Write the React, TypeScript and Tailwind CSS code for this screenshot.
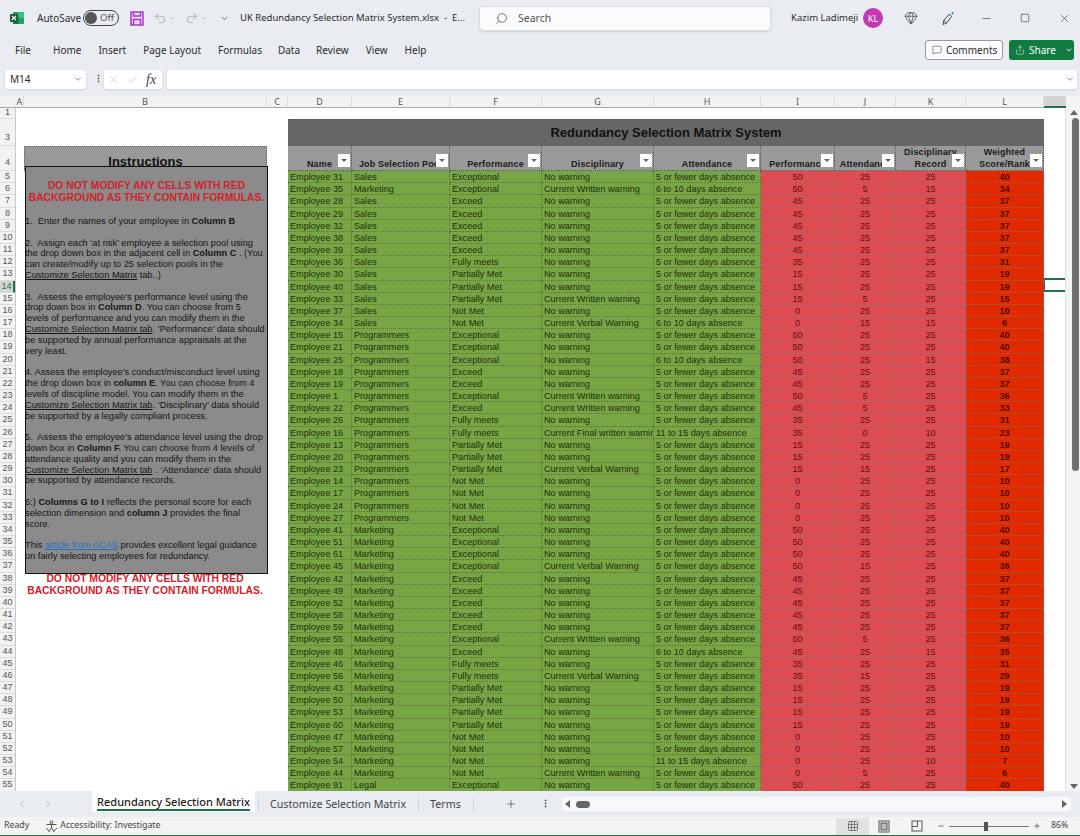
import { ChevronDown, ChevronLeft, ChevronRight, Check, Gem, Grid3x3, Minus, MessageSquare, Plus, Search, Share, Square, Undo2, Redo2, X } from "lucide-react";

type Row = [string, string, string, string, string, number, number, number, number];

const NW = "No warning";
const CW = "Current Written warning";
const CV = "Current Verbal Warning";
const FEW = "5 or fewer days absence";
const SIX = "6 to 10 days absence";
const ELEVEN = "11 to 15 days absence";

const rows: Row[] = [
  ["Employee 31", "Sales", "Exceptional", NW, FEW, 50, 25, 25, 40],
  ["Employee 35", "Marketing", "Exceptional", CW, SIX, 50, 5, 15, 34],
  ["Employee 28", "Sales", "Exceed", NW, FEW, 45, 25, 25, 37],
  ["Employee 29", "Sales", "Exceed", NW, FEW, 45, 25, 25, 37],
  ["Employee 32", "Sales", "Exceed", NW, FEW, 45, 25, 25, 37],
  ["Employee 38", "Sales", "Exceed", NW, FEW, 45, 25, 25, 37],
  ["Employee 39", "Sales", "Exceed", NW, FEW, 45, 25, 25, 37],
  ["Employee 36", "Sales", "Fully meets", NW, FEW, 35, 25, 25, 31],
  ["Employee 30", "Sales", "Partially Met", NW, FEW, 15, 25, 25, 19],
  ["Employee 40", "Sales", "Partially Met", NW, FEW, 15, 25, 25, 19],
  ["Employee 33", "Sales", "Partially Met", CW, FEW, 15, 5, 25, 15],
  ["Employee 37", "Sales", "Not Met", NW, FEW, 0, 25, 25, 10],
  ["Employee 34", "Sales", "Not Met", CV, SIX, 0, 15, 15, 6],
  ["Employee 15", "Programmers", "Exceptional", NW, FEW, 50, 25, 25, 40],
  ["Employee 21", "Programmers", "Exceptional", NW, FEW, 50, 25, 25, 40],
  ["Employee 25", "Programmers", "Exceptional", NW, SIX, 50, 25, 15, 38],
  ["Employee 18", "Programmers", "Exceed", NW, FEW, 45, 25, 25, 37],
  ["Employee 19", "Programmers", "Exceed", NW, FEW, 45, 25, 25, 37],
  ["Employee 1", "Programmers", "Exceptional", CW, FEW, 50, 5, 25, 36],
  ["Employee 22", "Programmers", "Exceed", CW, FEW, 45, 5, 25, 33],
  ["Employee 26", "Programmers", "Fully meets", NW, FEW, 35, 25, 25, 31],
  ["Employee 16", "Programmers", "Fully meets", "Current Final written warning", ELEVEN, 35, 0, 10, 23],
  ["Employee 13", "Programmers", "Partially Met", NW, FEW, 15, 25, 25, 19],
  ["Employee 20", "Programmers", "Partially Met", NW, FEW, 15, 25, 25, 19],
  ["Employee 23", "Programmers", "Partially Met", CV, FEW, 15, 15, 25, 17],
  ["Employee 14", "Programmers", "Not Met", NW, FEW, 0, 25, 25, 10],
  ["Employee 17", "Programmers", "Not Met", NW, FEW, 0, 25, 25, 10],
  ["Employee 24", "Programmers", "Not Met", NW, FEW, 0, 25, 25, 10],
  ["Employee 27", "Programmers", "Not Met", NW, FEW, 0, 25, 25, 10],
  ["Employee 41", "Marketing", "Exceptional", NW, FEW, 50, 25, 25, 40],
  ["Employee 51", "Marketing", "Exceptional", NW, FEW, 50, 25, 25, 40],
  ["Employee 61", "Marketing", "Exceptional", NW, FEW, 50, 25, 25, 40],
  ["Employee 45", "Marketing", "Exceptional", CV, FEW, 50, 15, 25, 38],
  ["Employee 42", "Marketing", "Exceed", NW, FEW, 45, 25, 25, 37],
  ["Employee 49", "Marketing", "Exceed", NW, FEW, 45, 25, 25, 37],
  ["Employee 52", "Marketing", "Exceed", NW, FEW, 45, 25, 25, 37],
  ["Employee 58", "Marketing", "Exceed", NW, FEW, 45, 25, 25, 37],
  ["Employee 59", "Marketing", "Exceed", NW, FEW, 45, 25, 25, 37],
  ["Employee 55", "Marketing", "Exceptional", CW, FEW, 50, 5, 25, 36],
  ["Employee 48", "Marketing", "Exceed", NW, SIX, 45, 25, 15, 35],
  ["Employee 46", "Marketing", "Fully meets", NW, FEW, 35, 25, 25, 31],
  ["Employee 56", "Marketing", "Fully meets", CV, FEW, 35, 15, 25, 29],
  ["Employee 43", "Marketing", "Partially Met", NW, FEW, 15, 25, 25, 19],
  ["Employee 50", "Marketing", "Partially Met", NW, FEW, 15, 25, 25, 19],
  ["Employee 53", "Marketing", "Partially Met", NW, FEW, 15, 25, 25, 19],
  ["Employee 60", "Marketing", "Partially Met", NW, FEW, 15, 25, 25, 19],
  ["Employee 47", "Marketing", "Not Met", NW, FEW, 0, 25, 25, 10],
  ["Employee 57", "Marketing", "Not Met", NW, FEW, 0, 25, 25, 10],
  ["Employee 54", "Marketing", "Not Met", NW, ELEVEN, 0, 25, 10, 7],
  ["Employee 44", "Marketing", "Not Met", CW, FEW, 0, 5, 25, 6],
  ["Employee 91", "Legal", "Exceptional", NW, FEW, 50, 25, 25, 40],
];

const tableCols = "grid grid-cols-[64px_98px_92px_112px_107px_74px_61px_70px_78px]";
const dotted = "border-r border-b border-dotted";

// rows in the sheet are 12.18px apart, kept on whole pixels so the dotted lines stay even
const rowHeight = (i: number) => (i % 6 === 2 ? "h-[13px] grid-rows-[13px]" : "h-[12px] grid-rows-[12px]");

function FilterButton() {
  return (
    <span className="absolute right-[1px] bottom-[3px] flex h-[13px] w-[12px] items-center justify-center bg-white">
      <span className="h-0 w-0 border-x-[3px] border-t-[3px] border-x-transparent border-t-[#666]" />
    </span>
  );
}

function HeaderCell({ lines }: { lines: string[] }) {
  return (
    <div className={`relative flex flex-col items-center justify-end overflow-hidden whitespace-nowrap text-[9px] leading-[12px] font-bold tracking-[0.15px] text-[#1b1b1b] ${dotted} border-[#555]`}>
      {lines.map((l) => (
        <div key={l}>{l}</div>
      ))}
      <FilterButton />
    </div>
  );
}

function TextCell({ children }: { children: string }) {
  return (
    <div className={`overflow-hidden whitespace-nowrap pl-[2px] ${dotted} border-[#5f7040] bg-[#78a645] text-[#18300c]`}>
      {children}
    </div>
  );
}

function NumCell({ value, strong }: { value: number; strong?: boolean }) {
  return strong ? (
    <div className={`overflow-hidden text-center font-bold ${dotted} border-[#8a6a60] bg-[#e12a00] text-[#4f0c00]`}>{value}</div>
  ) : (
    <div className={`overflow-hidden text-center ${dotted} border-[#8f6f70] bg-[#dc4c50] text-[#5f1014]`}>{value}</div>
  );
}

function Line({ children }: { children?: React.ReactNode }) {
  return <div className="h-[10.82px] whitespace-pre">{children}</div>;
}

function SheetLink({ children }: { children: string }) {
  return <span className="underline">{children}</span>;
}

function RedWarning() {
  return (
    <div className="text-center text-[10.3px] leading-[12px] font-bold whitespace-nowrap text-[#d4202a]">
      <div>DO NOT MODIFY ANY CELLS WITH RED</div>
      <div>BACKGROUND AS THEY CONTAIN FORMULAS.</div>
    </div>
  );
}

function Instructions() {
  return (
    <div className="absolute left-[9px] top-[58px] h-[408px] w-[243px] overflow-hidden border border-[#111] bg-[#8b8b8b]">
      <div className="pt-[13px]">
        <RedWarning />
      </div>
      <div className="-ml-[1px] pt-[12px] text-[9.25px] leading-[10.82px] text-[#151515]">
        <Line>1.  Enter the names of your employee in <b>Column B</b></Line>
        <Line />
        <Line>2.  Assign each ‘at risk’ employee a selection pool using</Line>
        <Line>the drop down box in the adjacent cell in <b>Column C</b> . (You</Line>
        <Line>can create/modify up to 25 selection pools in the</Line>
        <Line><SheetLink>Customize Selection Matrix</SheetLink> tab..)</Line>
        <Line />
        <Line>3.  Assess the employee's performance level using the</Line>
        <Line>drop down box in <b>Column D</b>. You can choose from 5</Line>
        <Line>levels of performance and you can modify them in the</Line>
        <Line><SheetLink>Customize Selection Matrix tab</SheetLink>. ‘Performance’ data should</Line>
        <Line>be supported by annual performance appraisals at the</Line>
        <Line>very least.</Line>
        <Line />
        <Line>4. Assess the employee's conduct/misconduct level using</Line>
        <Line>the drop down box in <b>column E</b>. You can choose from 4</Line>
        <Line>levels of discipline model. You can modify them in the</Line>
        <Line><SheetLink>Customize Selection Matrix tab</SheetLink>. ‘Disciplinary’ data should</Line>
        <Line>be supported by a legally compliant process.</Line>
        <Line />
        <Line>5.  Assess the employee's attendance level using the drop</Line>
        <Line>down box in <b>Column F.</b> You can choose from 4 levels of</Line>
        <Line>attendance quality and you can modify them in the</Line>
        <Line><SheetLink>Customize Selection Matrix tab</SheetLink> . ‘Attendance’ data should</Line>
        <Line>be supported by attendance records.</Line>
        <Line />
        <Line>6:) <b>Columns G to I</b> reflects the personal score for each</Line>
        <Line>selection dimension and <b>column J</b> provides the final</Line>
        <Line>score.</Line>
        <Line />
        <Line>This <span className="text-[#1f6fc4] underline">article from ACAS</span> provides excellent legal guidance</Line>
        <Line>on fairly selecting employees for redundancy.</Line>
      </div>
    </div>
  );
}

function RowHeaders() {
  return (
    <div className="w-[16px] shrink-0 border-r border-[#c8c8c8] bg-[#f2f2f2] text-center text-[9px] text-[#555]">
      <div className="flex h-[11px] items-center justify-center border-b border-[#dcdcdc]">1</div>
      <div className="flex h-[27px] items-end justify-center border-b border-[#dcdcdc]">3</div>
      <div className="flex h-[25px] items-end justify-center border-b border-[#dcdcdc]">4</div>
      {rows.map((_, i) => (
        <div
          key={i}
          className={`${rowHeight(i)} ${
            i + 5 === 14
              ? "border-b border-r-2 border-[#dcdcdc] border-r-[#1f7246] bg-[#d4d4d4] leading-[11px] text-[#1f7246]"
              : "border-b border-[#dcdcdc] leading-[11px]"
          }`}
        >
          {i + 5}
        </div>
      ))}
    </div>
  );
}

function ColumnHeaders() {
  const cols: [string, string][] = [
    ["A", "w-[8px]"],
    ["B", "w-[243px]"],
    ["C", "w-[21px]"],
    ["D", "w-[64px]"],
    ["E", "w-[98px]"],
    ["F", "w-[92px]"],
    ["G", "w-[112px]"],
    ["H", "w-[107px]"],
    ["I", "w-[74px]"],
    ["J", "w-[61px]"],
    ["K", "w-[70px]"],
    ["L", "w-[78px]"],
  ];
  return (
    <div className="flex h-[12px] bg-[#f2f2f2] text-[9px] leading-[11px] text-[#555]">
      <div className="w-[16px] shrink-0 border-b border-[#a8a8a8]" />
      {cols.map(([c, w]) => (
        <div key={c} className={`${w} shrink-0 border-r border-b border-r-[#dcdcdc] border-b-[#a8a8a8] text-center`}>
          {c}
        </div>
      ))}
      <div className="w-[22px] shrink-0 border-b-2 border-[#1f7246] bg-[#d4d4d4]" />
      <div className="flex-1 bg-[#f3f4f5]" />
    </div>
  );
}

function ExcelLogo() {
  return (
    <svg width="14" height="14" viewBox="0 0 14 14">
      <rect x="3" y="1" width="11" height="12" rx="1" fill="#21a366" />
      <rect x="8.5" y="1" width="5.5" height="6" fill="#33c481" />
      <rect x="3" y="7" width="5.5" height="6" fill="#107c41" />
      <rect x="0" y="3" width="8" height="8" rx="1" fill="#185c37" />
      <path d="M2 5l4 4M6 5l-4 4" stroke="#fff" strokeWidth="1.1" />
    </svg>
  );
}

function SaveIcon() {
  return (
    <svg width="14" height="15" viewBox="0 0 14 15" fill="none" stroke="#a43bc4" strokeWidth="1.5">
      <rect x="1" y="1" width="12" height="13" fill="#f0d8f6" />
      <path d="M3.5 1v4h7V1M3.5 14V8.5h7V14" />
    </svg>
  );
}

function CoauthorPen() {
  return (
    <svg width="14" height="15" viewBox="0 0 14 15" fill="none" stroke="#333" strokeWidth="0.9">
      <path d="M2 13.5l.8-4L8 3.2l2.6 2.2L5.5 12z" />
      <path d="M2.8 9.5L5.5 12" />
      <path d="M11.5 1v2.4M10.3 2.2h2.4" stroke="#2b88c8" />
    </svg>
  );
}

function AccessibilityIcon() {
  return (
    <svg width="13" height="13" viewBox="0 0 13 13" fill="none" stroke="#444" strokeWidth="0.9">
      <circle cx="6.5" cy="2.2" r="1.4" />
      <path d="M1.5 4.5h10M6.5 4.5v3M4 12l2.5-4.5L9 12M1 8l3 3M12 8l-3 3" />
    </svg>
  );
}

function PageLayoutIcon() {
  return (
    <svg width="12" height="13" viewBox="0 0 12 13" fill="none" stroke="#444" strokeWidth="0.9">
      <rect x="1" y="1" width="10" height="11" />
      <rect x="3" y="3" width="6" height="7" fill="#bbb" />
    </svg>
  );
}

function PageBreakIcon() {
  return (
    <svg width="12" height="12" viewBox="0 0 12 12" fill="none" stroke="#444" strokeWidth="0.9">
      <rect x="1" y="1" width="10" height="10" />
      <path d="M6.5 1v5.5H1" />
    </svg>
  );
}

export default function App() {
  return (
    <div className="flex h-[836px] w-[1080px] flex-col overflow-hidden bg-[#e9edf1] font-['Noto_Sans',sans-serif] text-[#2b2b2b]">
      {/* title bar */}
      <div className="flex h-[37px] items-center text-[10px] whitespace-nowrap">
        <div className="ml-[10px] w-[27px]"><ExcelLogo /></div>
        <span className="w-[46px]">AutoSave</span>
        <div className="flex h-[16px] w-[36px] items-center justify-between rounded-full border border-[#444] pl-[1px] pr-[4px] text-[9.5px] text-[#555]">
          <span className="h-[12px] w-[12px] rounded-full bg-[#555]" />
          Off
        </div>
        <div className="ml-[11px] w-[23px]"><SaveIcon /></div>
        <Undo2 className="h-[14px] w-[14px] text-[#9a9a9a]" strokeWidth={1.3} />
        <ChevronDown className="ml-[1px] h-[7px] w-[7px] text-[#9a9a9a]" />
        <Redo2 className="ml-[10px] h-[14px] w-[14px] text-[#9a9a9a]" strokeWidth={1.3} />
        <ChevronDown className="ml-[1px] h-[7px] w-[7px] text-[#9a9a9a]" />
        <ChevronDown className="ml-[13px] h-[9px] w-[9px] text-[#444]" />
        <span className="ml-[11px] w-[239px] whitespace-pre text-[9.5px]">UK Redundancy Selection Matrix System.xlsx  -  E...</span>
        <div className="flex h-[25px] w-[292px] items-center rounded-[4px] border border-[#dde0e3] bg-[#fafbfc] pl-[15px] text-[10.5px] text-[#555] shadow-sm">
          <Search className="h-[13px] w-[13px] -scale-x-100 text-[#444]" strokeWidth={1.3} />
          <span className="ml-[10px]">Search</span>
        </div>
        <span className="ml-[20px] w-[72px] text-[9.5px]">Kazim Ladimeji</span>
        <span className="flex h-[20px] w-[20px] items-center justify-center rounded-full bg-[#c239b3] text-[9px] text-white">KL</span>
        <Gem className="ml-[21px] h-[14px] w-[14px] text-[#333]" strokeWidth={1.2} />
        <span className="ml-[23px]"><CoauthorPen /></span>
        <Minus className="ml-[25px] h-[13px] w-[13px] text-[#333]" strokeWidth={1.1} />
        <Square className="ml-[27px] h-[10px] w-[10px] text-[#333]" strokeWidth={1.4} />
        <X className="ml-[28px] h-[13px] w-[13px] text-[#333]" strokeWidth={1.1} />
      </div>

      {/* ribbon tabs */}
      <div className="flex h-[33px] items-center pb-[6px] text-[10px]">
        <span className="ml-[15px]">File</span>
        <span className="ml-[22px]">Home</span>
        <span className="ml-[17px]">Insert</span>
        <span className="ml-[17px]">Page Layout</span>
        <span className="ml-[17px]">Formulas</span>
        <span className="ml-[16px]">Data</span>
        <span className="ml-[16px]">Review</span>
        <span className="ml-[17px]">View</span>
        <span className="ml-[17px]">Help</span>
        <div className="ml-auto flex h-[20px] w-[78px] items-center gap-[4px] rounded-[3px] border border-[#9a9a9a] bg-[#fafbfc] pl-[6px]">
          <MessageSquare className="h-[10px] w-[10px]" strokeWidth={1.2} />
          Comments
        </div>
        <div className="mr-[6px] ml-[6px] flex h-[20px] w-[65px] items-center gap-[4px] rounded-[3px] bg-[#107c41] pl-[6px] text-white">
          <Share className="h-[10px] w-[10px]" strokeWidth={1.3} />
          Share
          <ChevronDown className="ml-[5px] h-[8px] w-[8px]" strokeWidth={2.5} />
        </div>
      </div>

      {/* formula bar */}
      <div className="flex h-[26px] items-start text-[10px]">
        <div className="ml-[5px] flex h-[19px] w-[81px] items-center justify-between rounded-[3px] bg-white pr-[3px] pl-[5px] shadow-sm">
          M14
          <ChevronDown className="h-[10px] w-[10px] text-[#444]" strokeWidth={1.4} />
        </div>
        <div className="ml-[8px] mt-[5px] w-[10px] text-[9px] leading-[7px] font-bold">⋮</div>
        <div className="flex h-[19px] w-[58px] items-center gap-[6px] rounded-[3px] bg-white pl-[3px] shadow-sm">
          <X className="h-[13px] w-[13px] text-[#c0c0c0]" strokeWidth={1.2} />
          <Check className="h-[13px] w-[13px] text-[#c0c0c0]" strokeWidth={1.2} />
          <span className="ml-[1px] font-['Liberation_Serif',serif] text-[14px] text-[#444] italic">fx</span>
        </div>
        <div className="mr-[3px] ml-[5px] flex h-[19px] flex-1 items-center justify-end rounded-[3px] bg-white pr-[2px] shadow-sm">
          <ChevronDown className="h-[10px] w-[10px] text-[#444]" strokeWidth={1.4} />
        </div>
      </div>

      <ColumnHeaders />

      {/* sheet */}
      <div className="flex h-[684px] overflow-hidden bg-white font-['Liberation_Sans',sans-serif]">
        <RowHeaders />
        <div className="relative w-[272px] shrink-0">
          <div className="mt-[38px] ml-[8px] h-[25px] w-[243px] overflow-hidden border border-dotted border-[#666] bg-[#999] text-center text-[13px] leading-[25px] font-bold text-[#111]">
            <span className="relative top-[2px]">Instructions</span>
          </div>
          <Instructions />
          <div className="absolute top-[465px] left-0 w-[258px]">
            <RedWarning />
          </div>
        </div>
        <div className="w-[756px] shrink-0 pt-[11px] text-[9.1px] leading-[12px]">
          <div className="flex h-[27px] items-center justify-center border-t border-dotted border-[#555] bg-[#666] text-[13px] font-bold text-[#111]">
            Redundancy Selection Matrix System
          </div>
          <div className={`${tableCols} h-[25px] grid-rows-[25px] bg-[#999]`}>
            <HeaderCell lines={["Name"]} />
            <HeaderCell lines={["Job Selection Pool"]} />
            <HeaderCell lines={["Performance"]} />
            <HeaderCell lines={["Disciplinary"]} />
            <HeaderCell lines={["Attendance"]} />
            <HeaderCell lines={["Performance"]} />
            <HeaderCell lines={["Attendance"]} />
            <HeaderCell lines={["Disciplinary", "Record"]} />
            <HeaderCell lines={["Weighted", "Score/Rank"]} />
          </div>
          {rows.map((r, i) => (
            <div key={i} className={`${tableCols} ${rowHeight(i)}`}>
              <TextCell>{r[0]}</TextCell>
              <TextCell>{r[1]}</TextCell>
              <TextCell>{r[2]}</TextCell>
              <TextCell>{r[3]}</TextCell>
              <TextCell>{r[4]}</TextCell>
              <NumCell value={r[5]} />
              <NumCell value={r[6]} />
              <NumCell value={r[7]} />
              <NumCell value={r[8]} strong />
            </div>
          ))}
        </div>
        {/* column M with the selected cell */}
        <div className="w-[21px] shrink-0 pt-[170px]">
          <div className="h-[14px] border-y-2 border-l border-[#1f7246] bg-white" />
        </div>
        <div className="flex w-[15px] shrink-0 flex-col items-end border-l border-[#e2e2e2] bg-[#f3f4f5] pr-[1px]">
          <span className="mt-[2px] mr-[1px] h-0 w-0 border-x-[4px] border-b-[5px] border-x-transparent border-b-[#666]" />
          <span className="mt-[3px] h-[353px] w-[7px] rounded-full bg-[#6f6f6f]" />
          <span className="mt-auto mr-[1px] mb-[2px] h-0 w-0 border-x-[4px] border-t-[5px] border-x-transparent border-t-[#666]" />
        </div>
      </div>

      {/* sheet tabs */}
      <div className="flex h-[26px] items-center text-[10.7px]">
        <ChevronLeft className="ml-[16px] h-[12px] w-[12px] text-[#aaa]" strokeWidth={1.5} />
        <ChevronRight className="ml-[14px] h-[12px] w-[12px] text-[#aaa]" strokeWidth={1.5} />
        <div className="ml-[38px] flex h-[21px] w-[163px] items-start justify-center self-start bg-white pt-[3px] text-[11px] font-medium text-[#222]">
          <span className="border-b-2 border-[#1f7246] leading-[15px]">Redundancy Selection Matrix</span>
        </div>
        <span className="ml-[3px] h-[13px] w-[1px] bg-[#cfd3d7]" />
        <span className="ml-[11px] text-[#444]">Customize Selection Matrix</span>
        <span className="ml-[12px] h-[13px] w-[1px] bg-[#cfd3d7]" />
        <span className="ml-[11px] text-[#444]">Terms</span>
        <span className="ml-[12px] h-[13px] w-[1px] bg-[#cfd3d7]" />
        <Plus className="ml-[31px] h-[12px] w-[12px] text-[#444]" strokeWidth={1.3} />
        <span className="ml-[24px] text-[9px] font-bold">⋮</span>
        <div className="ml-[12px] flex h-[14px] w-[509px] items-center rounded-[4px] bg-[#f8f9fa] pr-[4px] pl-[3px]">
          <span className="h-0 w-0 border-y-[4px] border-r-[5px] border-y-transparent border-r-[#666]" />
          <span className="ml-[6px] h-[7px] w-[14px] rounded-full bg-[#666]" />
          <span className="ml-auto h-0 w-0 border-y-[4px] border-l-[5px] border-y-transparent border-l-[#666]" />
        </div>
      </div>

      {/* status bar */}
      <div className="flex h-[18px] items-center bg-[#f3f4f5] pr-[9px] text-[8.8px] text-[#444]">
        <span className="ml-[4px]">Ready</span>
        <span className="ml-[16px]"><AccessibilityIcon /></span>
        <span className="ml-[2px]">Accessibility: Investigate</span>
        <div className="ml-auto flex h-[17px] w-[33px] items-center justify-center bg-[#dfe1e3]">
          <Grid3x3 className="h-[12px] w-[12px]" strokeWidth={1.2} />
        </div>
        <span className="ml-[9px]"><PageLayoutIcon /></span>
        <span className="ml-[21px]"><PageBreakIcon /></span>
        <Minus className="ml-[14px] h-[8px] w-[8px]" />
        <div className="relative ml-[4px] h-[1px] w-[80px] bg-[#777]">
          <span className="absolute top-[-4px] left-[35px] h-[9px] w-[4px] bg-[#555]" />
        </div>
        <Plus className="ml-[4px] h-[8px] w-[8px]" />
        <span className="ml-[10px] w-[20px]">86%</span>
      </div>
      <div className="h-[1px] bg-[#1f7246]" />
    </div>
  );
}
